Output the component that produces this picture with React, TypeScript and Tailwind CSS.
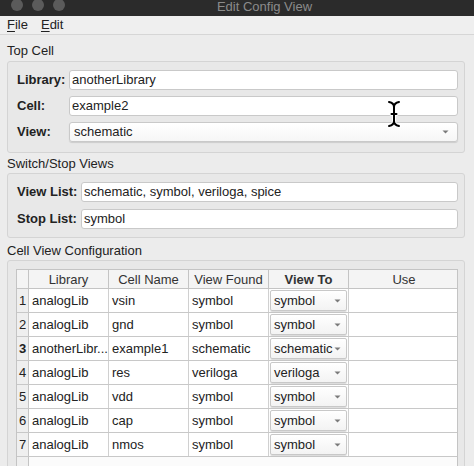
import React from "react";

const font = { fontFamily: '"Liberation Sans", Arial, sans-serif' };

type Row = { n: number; lib: string; cell: string; found: string; to: string; bold?: boolean };

const rows: Row[] = [
  { n: 1, lib: "analogLib", cell: "vsin", found: "symbol", to: "symbol" },
  { n: 2, lib: "analogLib", cell: "gnd", found: "symbol", to: "symbol" },
  { n: 3, lib: "anotherLibr...", cell: "example1", found: "schematic", to: "schematic", bold: true },
  { n: 4, lib: "analogLib", cell: "res", found: "veriloga", to: "veriloga" },
  { n: 5, lib: "analogLib", cell: "vdd", found: "symbol", to: "symbol" },
  { n: 6, lib: "analogLib", cell: "cap", found: "symbol", to: "symbol" },
  { n: 7, lib: "analogLib", cell: "nmos", found: "symbol", to: "symbol" },
];

function Caret() {
  return (
    <svg width="7" height="4" viewBox="0 0 7 4" className="shrink-0">
      <path d="M0.5 0.5 L6.5 0.5 L3.5 3.5 Z" fill="#7a7a7a" />
    </svg>
  );
}

function Field({ value, combo }: { value: string; combo?: boolean }) {
  return (
    <div
      className={`flex-1 h-[20px] flex items-center border border-[#c9c9c9] rounded-[3px] ${
        combo
          ? "bg-gradient-to-b from-white to-[#f6f6f6] shadow-[0_1px_1px_rgba(0,0,0,0.12)] pl-[4px] pr-[8px]"
          : "bg-white px-[2px]"
      } text-[#222]`}
    >
      <span className="flex-1 truncate">{value}</span>
      {combo && <Caret />}
    </div>
  );
}

function FormRow({ label, value, labelW, combo }: { label: string; value: string; labelW: string; combo?: boolean }) {
  return (
    <div className="flex items-center">
      <div className={`${labelW} font-bold text-[#222] shrink-0`}>{label}</div>
      <Field value={value} combo={combo} />
    </div>
  );
}

function Cursor() {
  return (
    <svg width="14" height="28" viewBox="0 0 14 28" className="absolute left-[387px] top-[100px]">
      <g fill="none" strokeLinecap="round">
        <path d="M2 2 Q7 3 7 7 L7 21 Q7 25 2 26 M12 2 Q7 3 7 7 M7 21 Q7 25 12 26 M4.5 14 L9.5 14" stroke="#fff" strokeWidth="4" />
        <path d="M2 2 Q7 3 7 7 L7 21 Q7 25 2 26 M12 2 Q7 3 7 7 M7 21 Q7 25 12 26 M4.5 14 L9.5 14" stroke="#000" strokeWidth="2" />
      </g>
    </svg>
  );
}

const cols = "grid-cols-[12px_80px_80px_80px_80px_110px]";

export default function App() {
  return (
    <div className="relative w-[474px] h-[466px] overflow-hidden bg-[#ececec] text-[13px] text-[#222]" style={font}>
      {/* Title bar */}
      <div className="h-[16px] bg-[#2b2b2b] flex items-start relative">
        <div className="flex gap-[9px] pl-[11px] -mt-[1px]">
          <div className="w-[12px] h-[12px] rounded-full bg-[#5b5b5b]" />
          <div className="w-[12px] h-[12px] rounded-full bg-[#5b5b5b]" />
          <div className="w-[12px] h-[12px] rounded-full bg-[#5b5b5b]" />
        </div>
        <div className="flex-1 text-center text-[#8b8b8b] text-[13px] leading-[14px] pr-[10px]">Edit Config View</div>
      </div>

      {/* Menu bar */}
      <div className="h-[19px] flex items-center gap-[13px] pl-[7px] border-b border-[#d6d6d6] bg-[#efefef]">
        <span>
          <span className="underline underline-offset-2">F</span>ile
        </span>
        <span>
          <span className="underline underline-offset-2">E</span>dit
        </span>
      </div>

      <div className="px-[7px] pr-[9px]">
        <div className="h-[26px] pt-[8px] leading-[16px]">Top Cell</div>
        <div className="border border-[#d4d4d4] rounded-[3px] bg-[#e8e8e8] pt-[8px] pb-[10px] pl-[9px] pr-[6px] flex flex-col gap-[6px]">
          <FormRow label="Library:" value="anotherLibrary" labelW="w-[52px]" />
          <FormRow label="Cell:" value="example2" labelW="w-[52px]" />
          <FormRow label="View:" value="schematic" labelW="w-[52px]" combo />
        </div>

        <div className="h-[20px] pt-[3px] leading-[16px]">Switch/Stop Views</div>
        <div className="border border-[#d4d4d4] rounded-[3px] bg-[#e8e8e8] pt-[8px] pb-[8px] pl-[9px] pr-[6px] flex flex-col gap-[7px]">
          <FormRow label="View List:" value="schematic, symbol, veriloga, spice" labelW="w-[64px]" />
          <FormRow label="Stop List:" value="symbol" labelW="w-[64px]" />
        </div>

        <div className="h-[22px] pt-[5px] leading-[16px]">Cell View Configuration</div>
        <div className="border border-[#d4d4d4] rounded-[3px] bg-[#e8e8e8] pt-[8px] pl-[8px] pr-[6px] h-[220px]">
          <div className="border border-[#c4c4c4] bg-[#fbfbfb] h-[220px]">
            {/* header */}
            <div className={`grid ${cols} h-[19px] bg-[#f4f4f4] border-b border-[#c4c4c4]`}>
              <div className="border-r border-[#c4c4c4]" />
              {["Library", "Cell Name", "View Found", "View To", "Use"].map((h, i) => (
                <div
                  key={h}
                  className={`flex items-center justify-center text-[#333] ${i < 4 ? "border-r border-[#c4c4c4]" : ""} ${
                    h === "View To" ? "font-bold text-[#222]" : ""
                  }`}
                >
                  {h}
                </div>
              ))}
            </div>
            {rows.map((r) => (
              <div key={r.n} className={`grid ${cols} h-[24px] border-b border-[#c8c8c8] bg-white`}>
                <div className={`flex items-center justify-center bg-[#efefef] border-r border-[#c4c4c4] ${r.bold ? "font-bold" : ""}`}>
                  {r.n}
                </div>
                <div className="flex items-center pl-[3px] border-r border-[#d0d0d0] overflow-hidden whitespace-nowrap">{r.lib}</div>
                <div className="flex items-center pl-[3px] border-r border-[#d0d0d0]">{r.cell}</div>
                <div className="flex items-center pl-[3px] border-r border-[#d0d0d0]">{r.found}</div>
                <div className="flex items-center px-[1px] py-[1px] border-r border-[#d0d0d0]">
                  <div className="w-full h-[21px] flex items-center pl-[3px] pr-[5px] border border-[#c8c8c8] rounded-[2px] bg-gradient-to-b from-white to-[#f3f3f3] shadow-[0_1px_1px_rgba(0,0,0,0.15)]">
                    <span className="flex-1 whitespace-nowrap">{r.to}</span>
                    <Caret />
                  </div>
                </div>
                <div />
              </div>
            ))}
            <div className={`grid ${cols} h-[20px]`}>
              <div className="bg-[#efefef] border-r border-[#c4c4c4]" />
            </div>
          </div>
        </div>
      </div>

      <Cursor />
    </div>
  );
}
